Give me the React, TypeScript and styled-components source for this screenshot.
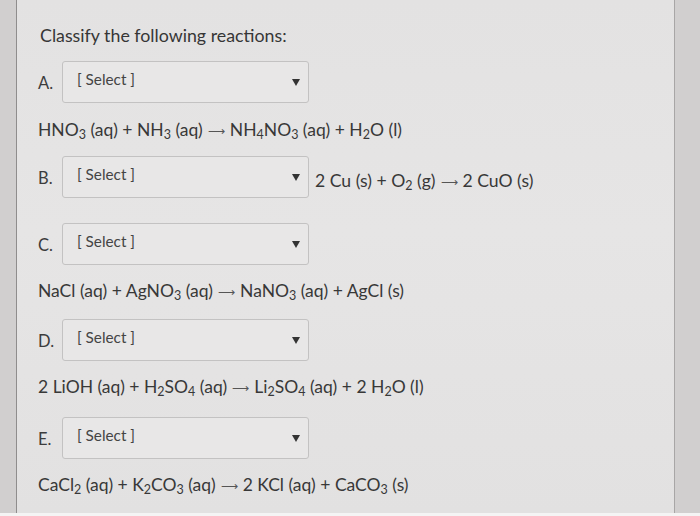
import React from "react";
import styled, { createGlobalStyle } from "styled-components";

const Global = createGlobalStyle`
  html, body { margin: 0; padding: 0; }
  body {
    background: #d3d1d1;
    font-family: Lato, "Open Sans", "Liberation Sans", sans-serif;
    color: #383838;
  }
`;

const Frame = styled.div`
  width: 700px;
  height: 516px;
  display: flex;
  flex-direction: column;
  overflow: hidden;
`;

const Screen = styled.div`
  flex: 1;
  display: flex;
  background: #d1cfcf;
`;

const Panel = styled.div`
  margin-left: 16px;
  width: 659px;
  border-left: 1px solid #8f8d8d;
  border-right: 1px solid #a8a6a6;
  background: linear-gradient(180deg, #e3e2e2 0%, #e6e5e5 45%, #e2e1e1 100%);
  padding: 22px 0 0 21px;
  box-sizing: border-box;
`;

const BottomStrip = styled.div`
  height: 3px;
  background: #f4f4f4;
`;

const Title = styled.div`
  font-size: 17.8px;
  line-height: 26px;
  margin-left: 2px;
  color: #363636;
`;

const Row = styled.div<{ $top: number }>`
  display: flex;
  align-items: center;
  margin-top: ${(p) => p.$top}px;
`;

const Label = styled.span`
  width: 24px;
  font-size: 16.5px;
  color: #3c3c3c;
`;

const SelectBox = styled.div`
  width: 247px;
  height: 42px;
  box-sizing: border-box;
  border: 1px solid #c3c2c2;
  border-radius: 3px;
  background: #e8e7e7;
  display: flex;
  align-items: center;
  justify-content: space-between;
  padding: 0 8px 0 14px;
  margin-top: -2px;
`;

const SelectText = styled.span`
  font-size: 15.3px;
  color: #444;
  margin-top: -6px;
`;

const Caret = styled.span`
  width: 0;
  height: 0;
  border-left: 4px solid transparent;
  border-right: 4px solid transparent;
  border-top: 7px solid #333;
`;

const Equation = styled.div<{ $top: number }>`
  font-size: 17.5px;
  line-height: 26px;
  margin-top: ${(p) => p.$top}px;
  color: #383838;
  white-space: nowrap;
`;

const InlineEq = styled.span`
  font-size: 17.6px;
  margin-left: 6px;
  margin-top: 4px;
  color: #383838;
  white-space: nowrap;
`;

const Sub = styled.sub`
  font-size: 12.5px;
  vertical-align: -3px;
  line-height: 0;
`;

const Arrow = styled.span`
  font-size: 12px;
  color: #555;
  margin: 0 5px;
  vertical-align: 1px;
`;

type Part = string | { s: string };

const Formula: React.FC<{ parts: Part[] }> = ({ parts }) => (
  <>
    {parts.map((p, i) =>
      typeof p === "string" ? (
        p === "->" ? (
          <Arrow key={i}>⟶</Arrow>
        ) : (
          <React.Fragment key={i}>{p}</React.Fragment>
        )
      ) : (
        <Sub key={i}>{p.s}</Sub>
      )
    )}
  </>
);

const Select: React.FC = () => (
  <SelectBox>
    <SelectText>[ Select ]</SelectText>
    <Caret />
  </SelectBox>
);

export default function App() {
  return (
    <Frame>
      <Global />
      <Screen>
        <Panel>
          <Title>Classify the following reactions:</Title>

          <Row $top={15}>
            <Label>A.</Label>
            <Select />
          </Row>
          <Equation $top={14}>
            <Formula
              parts={["HNO", { s: "3" }, " (aq) + NH", { s: "3" }, " (aq)", "->", "NH", { s: "4" }, "NO", { s: "3" }, " (aq) + H", { s: "2" }, "O (l)"]}
            />
          </Equation>

          <Row $top={14}>
            <Label>B.</Label>
            <Select />
            <InlineEq>
              <Formula parts={["2 Cu (s) + O", { s: "2" }, " (g)", "->", "2 CuO (s)"]} />
            </InlineEq>
          </Row>

          <Row $top={27}>
            <Label>C.</Label>
            <Select />
          </Row>
          <Equation $top={13}>
            <Formula
              parts={["NaCl (aq) + AgNO", { s: "3" }, " (aq)", "->", "NaNO", { s: "3" }, " (aq) + AgCl (s)"]}
            />
          </Equation>

          <Row $top={16}>
            <Label>D.</Label>
            <Select />
          </Row>
          <Equation $top={13}>
            <Formula
              parts={["2 LiOH (aq) + H", { s: "2" }, "SO", { s: "4" }, " (aq)", "->", "Li", { s: "2" }, "SO", { s: "4" }, " (aq) + 2 H", { s: "2" }, "O (l)"]}
            />
          </Equation>

          <Row $top={18}>
            <Label>E.</Label>
            <Select />
          </Row>
          <Equation $top={13}>
            <Formula
              parts={["CaCl", { s: "2" }, " (aq) + K", { s: "2" }, "CO", { s: "3" }, " (aq)", "->", "2 KCl (aq) + CaCO", { s: "3" }, " (s)"]}
            />
          </Equation>
        </Panel>
      </Screen>
      <BottomStrip />
    </Frame>
  );
}
